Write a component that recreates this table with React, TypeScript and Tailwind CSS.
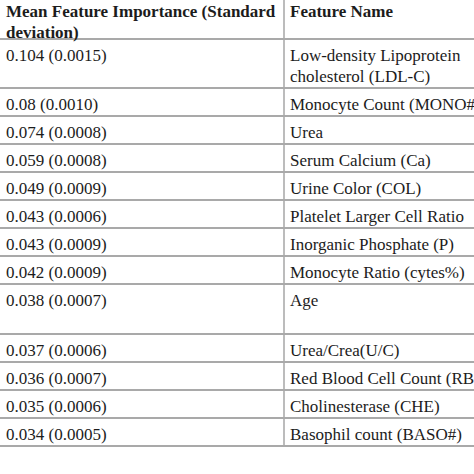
const rows: { imp: string; name: string[]; tall?: boolean }[] = [
    { imp: "0.104 (0.0015)", name: ["Low-density Lipoprotein", "cholesterol (LDL-C)"] },
    { imp: "0.08 (0.0010)", name: ["Monocyte Count (MONO#)"] },
    { imp: "0.074 (0.0008)", name: ["Urea"] },
    { imp: "0.059 (0.0008)", name: ["Serum Calcium (Ca)"] },
    { imp: "0.049 (0.0009)", name: ["Urine Color (COL)"] },
    { imp: "0.043 (0.0006)", name: ["Platelet Larger Cell Ratio"] },
    { imp: "0.043 (0.0009)", name: ["Inorganic Phosphate (P)"] },
    { imp: "0.042 (0.0009)", name: ["Monocyte Ratio (cytes%)"] },
    { imp: "0.038 (0.0007)", name: ["Age"], tall: true },
    { imp: "0.037 (0.0006)", name: ["Urea/Crea(U/C)"] },
    { imp: "0.036 (0.0007)", name: ["Red Blood Cell Count (RBC)"] },
    { imp: "0.035 (0.0006)", name: ["Cholinesterase (CHE)"] },
    { imp: "0.034 (0.0005)", name: ["Basophil count (BASO#)"] },
];

export default function App() {
    return (
        <div className="w-[474px] h-[474px] overflow-hidden bg-white text-[#1c1c1c] text-[17px] leading-[21px] font-['Liberation_Serif',serif]">
            <div className="w-[700px]">
                <div className="grid grid-cols-[283px_1fr] border-b-2 border-[#a9a9a9] font-bold">
                    <div className="pl-[6px] pt-[1px] pb-[2px] h-[38px]">
                        Mean Feature Importance (Standard deviation)
                    </div>
                    <div className="border-l-2 border-[#bcbcbc] pl-[5px] pt-[1px]">Feature Name</div>
                </div>
                {rows.map((row) => (
                    <div
                        key={row.imp + row.name[0]}
                        className="grid grid-cols-[283px_1fr] border-b-2 border-[#a9a9a9]"
                    >
                        <div className={`pl-[6px] pt-[5px] ${row.name.length > 1 || row.tall ? "pb-[5px]" : "pb-[0px]"}`}>
                            {row.imp}
                        </div>
                        <div className={`border-l-2 border-[#bcbcbc] pl-[5px] pt-[5px] ${row.tall ? "h-[48px]" : ""}`}>
                            {row.name.map((line) => (
                                <div key={line}>{line}</div>
                            ))}
                        </div>
                    </div>
                ))}
                <div className="grid grid-cols-[283px_1fr]">
                    <div className="h-[40px]" />
                </div>
            </div>
        </div>
    );
}
